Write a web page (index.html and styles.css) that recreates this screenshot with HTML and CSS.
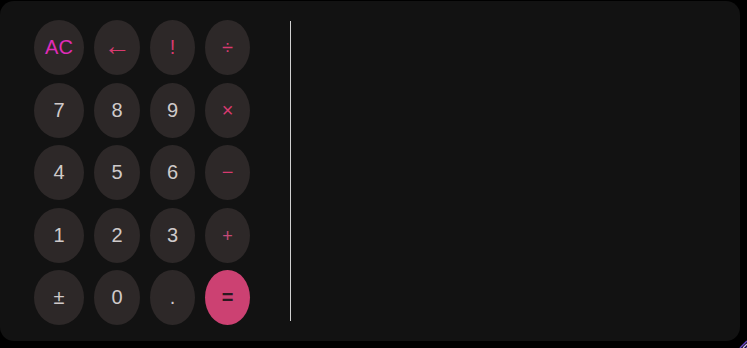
FILE: index.html
```html
<!DOCTYPE html>
<html>
<head>
<meta charset="utf-8">
<link rel="stylesheet" href="styles.css">
</head>
<body>
<div class="calc">
  <div class="keys">
    <div class="key clear">AC</div>
    <div class="key op arrow">←</div>
    <div class="key op">!</div>
    <div class="key op">÷</div>
    <div class="key">7</div>
    <div class="key">8</div>
    <div class="key">9</div>
    <div class="key op">×</div>
    <div class="key">4</div>
    <div class="key">5</div>
    <div class="key">6</div>
    <div class="key op">−</div>
    <div class="key">1</div>
    <div class="key">2</div>
    <div class="key">3</div>
    <div class="key op plus">+</div>
    <div class="key">±</div>
    <div class="key">0</div>
    <div class="key">.</div>
    <div class="key eq">=</div>
  </div>
  <div class="divider"></div>
</div>
<svg class="grip" width="8" height="8" viewBox="0 0 8 8">
  <line x1="8" y1="1" x2="1" y2="8" stroke="#6a4bc8" stroke-width="1.4"/>
  <line x1="8" y1="4" x2="4" y2="8" stroke="#c9b8f0" stroke-width="1.4"/>
  <line x1="8" y1="7" x2="7" y2="8" stroke="#6a4bc8" stroke-width="1.4"/>
</svg>
</body>
</html>
```
FILE: styles.css
```css
html, body {
  margin: 0;
  padding: 0;
  background: #000;
  height: 100%;
  overflow: hidden;
}
body {
  position: relative;
  font-family: "Liberation Sans", Arial, sans-serif;
}
.calc {
  margin-top: 1px;
  width: 740px;
  height: 340px;
  background: #121212;
  border-radius: 14px;
  box-sizing: border-box;
  padding: 19px 0 0 34px;
  display: flex;
  align-items: flex-start;
}
.keys {
  display: grid;
  grid-template-columns: 50px 46px 45px 45px;
  grid-auto-rows: 55px;
  column-gap: 10px;
  row-gap: 7.5px;
}
.key {
  background: #2d2828;
  border-radius: 50%;
  display: flex;
  align-items: center;
  justify-content: center;
  color: #cfcaca;
  font-size: 20px;
}
.key.clear {
  color: #e02cb8;
}
.key.op {
  color: #d83a6f;
}
.key.arrow {
  font-size: 27px;
  padding-bottom: 2px;
  box-sizing: border-box;
}
.key.plus {
  font-size: 18px;
  color: #c44a78;
  padding-top: 3px;
  box-sizing: border-box;
}
.key.eq {
  background: #cc4172;
  color: #2a1820;
  font-weight: bold;
}
.divider {
  width: 1px;
  height: 300px;
  margin-top: 1px;
  margin-left: 40px;
  background: #d0d0d0;
}
.grip {
  position: absolute;
  right: 0;
  bottom: 0;
}
```
